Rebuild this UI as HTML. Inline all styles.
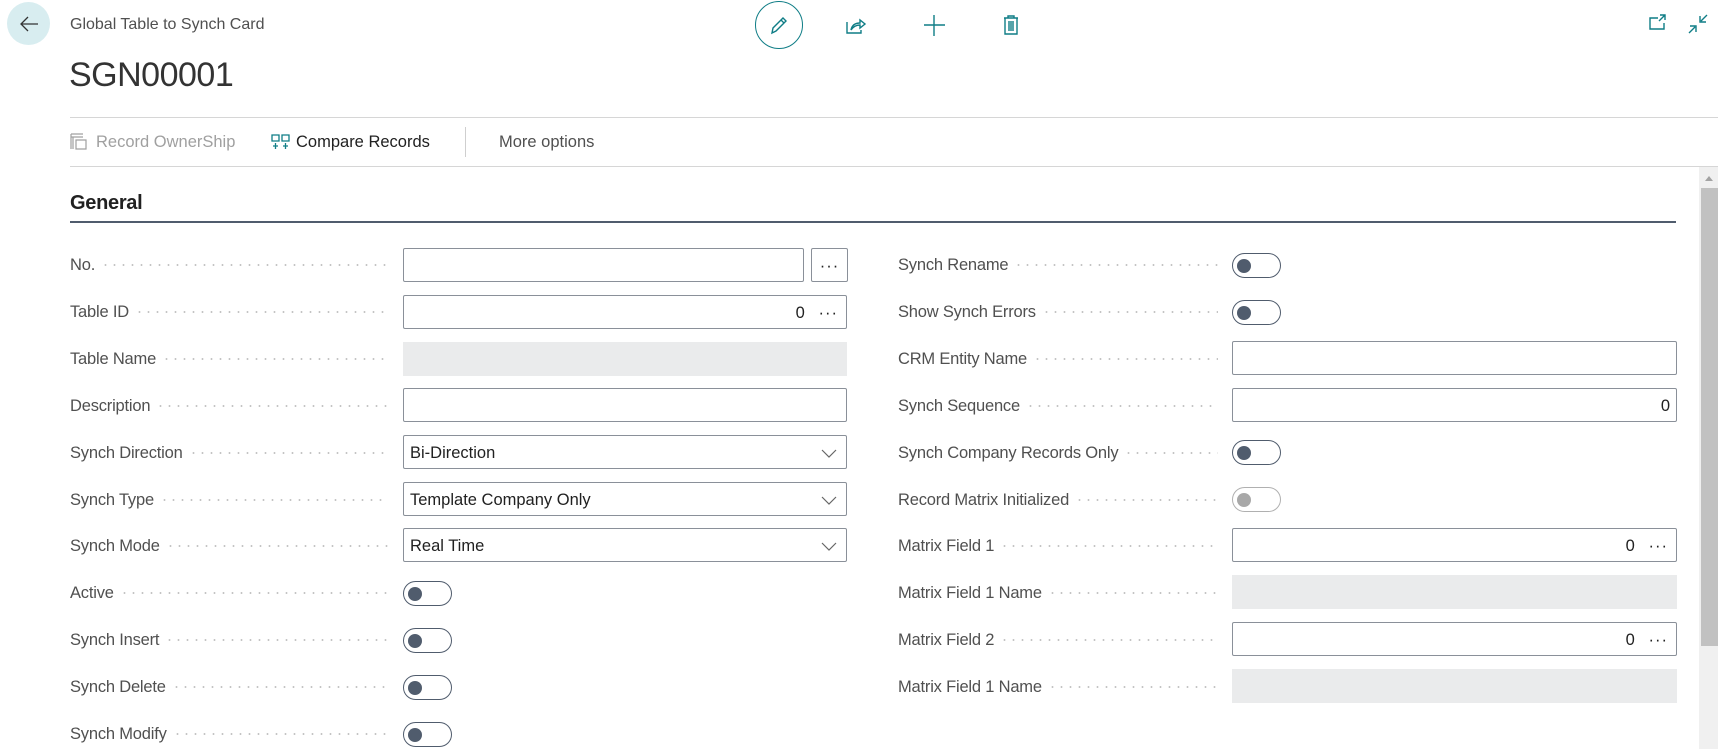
<!DOCTYPE html>
<html><head><meta charset="utf-8"><style>
*{margin:0;padding:0;box-sizing:border-box}
body{width:1718px;height:749px;background:#fff;font-family:"Liberation Sans",sans-serif;color:#212121;position:relative;overflow:hidden}
.a{position:absolute}
.lbl{position:absolute;font-size:16.5px;color:#505050;height:20px;line-height:20px;display:flex;align-items:center;letter-spacing:-0.2px}
.lbl .d{flex:1;height:2px;margin-left:6px;margin-right:0;background-image:radial-gradient(circle,#c4c4c4 0.8px,transparent 1.1px);background-size:9px 2px;background-repeat:repeat-x}
.inp{position:absolute;height:34px;border:1px solid #8a9099;border-radius:2px;background:#fff;font-size:16.5px;line-height:34px;padding:0 6px}
.dis{position:absolute;height:34px;background:#eaebec}
.tg{position:absolute;width:49px;height:25px;border:1px solid #505c6d;border-radius:13px}
.tg::after{content:"";position:absolute;left:4px;top:4.5px;width:14px;height:14px;border-radius:50%;background:#505c6d}
.tg.off{border-color:#b0b0b0}.tg.off::after{background:#a8a8a8}
.chev{position:absolute;right:9px;top:10px}
</style></head><body>
<div class="a" style="left:7px;top:2px;width:43px;height:43px;border-radius:50%;background:#d8edf0"></div>
<svg class="a" style="left:17px;top:12px" width="24" height="24" viewBox="0 0 24 24"><path d="M21 12H4M11 5l-7 7 7 7" fill="none" stroke="#333" stroke-width="1.3"/></svg>
<div class="a" style="left:70px;top:16px;font-size:16px;color:#505050">Global Table to Synch Card</div>
<div class="a" style="left:69px;top:56px;font-size:34px;color:#333;letter-spacing:-0.5px">SGN00001</div>
<div class="a" style="left:755px;top:1px;width:48px;height:48px;border-radius:50%;border:1.3px solid #0f7d86"></div>
<svg class="a" style="left:767px;top:13px" width="24" height="24" viewBox="0 0 24 24"><path d="M5 20l1-5L16 5l3 3L9 18zM14 7l3 3" fill="none" stroke="#0f7d86" stroke-width="1.4"/></svg>
<svg class="a" style="left:843px;top:13px" width="24" height="24" viewBox="0 0 24 24"><path d="M4 9v11h14v-3M8 17c1-5 4-7 9-7V7l5 4-5 4v-3c-4 0-7 2-9 5z" fill="none" stroke="#0f7d86" stroke-width="1.4"/></svg>
<svg class="a" style="left:922px;top:13px" width="24" height="24" viewBox="0 0 24 24"><path d="M12 2v21M2 12h21" stroke="#0f7d86" stroke-width="1.4"/></svg>
<svg class="a" style="left:999px;top:13px" width="24" height="24" viewBox="0 0 24 24"><path d="M5 5h14M9 5V3h6v2M6 5v16h12V5M10 8v10M12 8v10M14 8v10" fill="none" stroke="#0f7d86" stroke-width="1.4"/></svg>
<svg class="a" style="left:1649px;top:14px" width="20" height="20" viewBox="0 0 20 20"><path d="M9 4H1v11h14V9M11 1h5v5M16 1l-6 6" fill="none" stroke="#0f7d86" stroke-width="1.4"/></svg>
<svg class="a" style="left:1688px;top:14px" width="20" height="20" viewBox="0 0 20 20"><path d="M19 1l-6 6M12 2v6h6M1 19l6-6M8 18v-6H2" fill="none" stroke="#0f7d86" stroke-width="1.4"/></svg>
<div class="a" style="left:70px;top:117px;width:1648px;height:1px;background:#d6d6d6"></div>
<div class="a" style="left:70px;top:166px;width:1648px;height:1px;background:#d6d6d6"></div>
<svg class="a" style="left:70px;top:133px" width="18" height="18" viewBox="0 0 18 18"><path d="M1 1h12M1 4h12M3 4v12M1 1v15M6 7h10v9H6z" fill="none" stroke="#a0a0a0" stroke-width="1.2"/></svg>
<div class="a" style="left:96px;top:133px;font-size:16.5px;color:#a0a0a0">Record OwnerShip</div>
<svg class="a" style="left:271px;top:134px" width="20" height="18" viewBox="0 0 20 18"><path d="M1 1h7v6H1zM11 1h7v6h-7zM4.5 9v6M2 12h5M14.5 9v6M12 12h5" fill="none" stroke="#0f7d86" stroke-width="1.3"/></svg>
<div class="a" style="left:296px;top:133px;font-size:16.5px;color:#212121">Compare Records</div>
<div class="a" style="left:465px;top:127px;width:1px;height:30px;background:#cfcfcf"></div>
<div class="a" style="left:499px;top:133px;font-size:16.5px;color:#505050">More options</div>
<div class="a" style="left:70px;top:192px;font-size:20px;font-weight:bold;color:#212121;letter-spacing:-0.3px">General</div>
<div class="a" style="left:70px;top:221px;width:1606px;height:2px;background:#505c6d"></div>
<div class="a" style="left:1699px;top:167px;width:19px;height:582px;background:#f0f0f0"></div>
<div class="a" style="left:1701px;top:188px;width:17px;height:458px;background:#c1c1c1"></div>
<svg class="a" style="left:1703px;top:174px" width="12" height="8"><path d="M2 7l4-5 4 5z" fill="#a3a3a3"/></svg>

<div class="lbl" style="left:70px;top:255px;width:318px">No.<span class="d"></span></div>
<div class="inp" style="left:403px;top:248px;width:401px"></div>
<div class="inp" style="left:811px;top:248px;width:37px;text-align:center;padding:0;letter-spacing:1px">···</div>
<div class="lbl" style="left:70px;top:302px;width:318px">Table ID<span class="d"></span></div>
<div class="inp" style="left:403px;top:295px;width:444px;text-align:right;padding-right:8px">0 &nbsp; <span style="letter-spacing:1px">···</span></div>
<div class="lbl" style="left:70px;top:349px;width:318px">Table Name<span class="d"></span></div>
<div class="dis" style="left:403px;top:342px;width:444px"></div>
<div class="lbl" style="left:70px;top:396px;width:318px">Description<span class="d"></span></div>
<div class="inp" style="left:403px;top:388px;width:444px"></div>
<div class="lbl" style="left:70px;top:443px;width:318px">Synch Direction<span class="d"></span></div>
<div class="inp" style="left:403px;top:435px;width:444px">Bi-Direction<svg class="chev" width="16" height="14"><path d="M1 4l7 7 7-7" fill="none" stroke="#666" stroke-width="1.2"/></svg></div>
<div class="lbl" style="left:70px;top:490px;width:318px">Synch Type<span class="d"></span></div>
<div class="inp" style="left:403px;top:482px;width:444px">Template Company Only<svg class="chev" width="16" height="14"><path d="M1 4l7 7 7-7" fill="none" stroke="#666" stroke-width="1.2"/></svg></div>
<div class="lbl" style="left:70px;top:536px;width:318px">Synch Mode<span class="d"></span></div>
<div class="inp" style="left:403px;top:528px;width:444px">Real Time<svg class="chev" width="16" height="14"><path d="M1 4l7 7 7-7" fill="none" stroke="#666" stroke-width="1.2"/></svg></div>
<div class="lbl" style="left:70px;top:583px;width:318px">Active<span class="d"></span></div>
<div class="tg" style="left:403px;top:581px"></div>
<div class="lbl" style="left:70px;top:630px;width:318px">Synch Insert<span class="d"></span></div>
<div class="tg" style="left:403px;top:628px"></div>
<div class="lbl" style="left:70px;top:677px;width:318px">Synch Delete<span class="d"></span></div>
<div class="tg" style="left:403px;top:675px"></div>
<div class="lbl" style="left:70px;top:724px;width:318px">Synch Modify<span class="d"></span></div>
<div class="tg" style="left:403px;top:722px"></div>

<div class="lbl" style="left:898px;top:255px;width:320px">Synch Rename<span class="d"></span></div>
<div class="tg" style="left:1232px;top:253px"></div>
<div class="lbl" style="left:898px;top:302px;width:320px">Show Synch Errors<span class="d"></span></div>
<div class="tg" style="left:1232px;top:300px"></div>
<div class="lbl" style="left:898px;top:349px;width:320px">CRM Entity Name<span class="d"></span></div>
<div class="inp" style="left:1232px;top:341px;width:445px"></div>
<div class="lbl" style="left:898px;top:396px;width:320px">Synch Sequence<span class="d"></span></div>
<div class="inp" style="left:1232px;top:388px;width:445px;text-align:right">0</div>
<div class="lbl" style="left:898px;top:443px;width:320px">Synch Company Records Only<span class="d"></span></div>
<div class="tg" style="left:1232px;top:440px"></div>
<div class="lbl" style="left:898px;top:490px;width:320px">Record Matrix Initialized<span class="d"></span></div>
<div class="tg off" style="left:1232px;top:487px"></div>
<div class="lbl" style="left:898px;top:536px;width:320px">Matrix Field 1<span class="d"></span></div>
<div class="inp" style="left:1232px;top:528px;width:445px;text-align:right;padding-right:8px">0 &nbsp; <span style="letter-spacing:1px">···</span></div>
<div class="lbl" style="left:898px;top:583px;width:320px">Matrix Field 1 Name<span class="d"></span></div>
<div class="dis" style="left:1232px;top:575px;width:445px"></div>
<div class="lbl" style="left:898px;top:630px;width:320px">Matrix Field 2<span class="d"></span></div>
<div class="inp" style="left:1232px;top:622px;width:445px;text-align:right;padding-right:8px">0 &nbsp; <span style="letter-spacing:1px">···</span></div>
<div class="lbl" style="left:898px;top:677px;width:320px">Matrix Field 1 Name<span class="d"></span></div>
<div class="dis" style="left:1232px;top:669px;width:445px"></div>
</body></html>
